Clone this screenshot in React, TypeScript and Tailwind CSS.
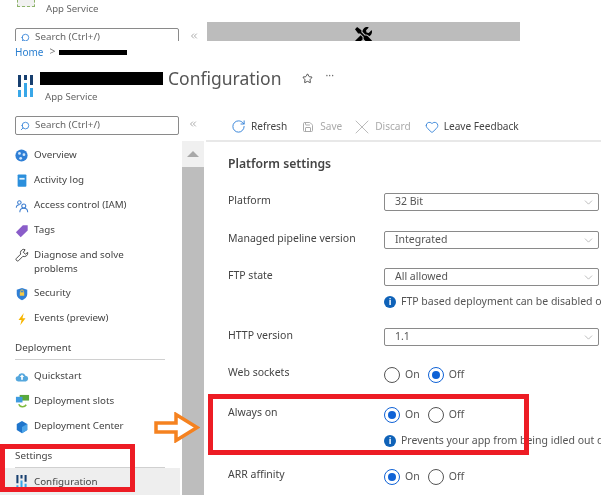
import type { ReactNode } from "react";
import { FaTools } from "react-icons/fa";
import {
  ChevronDown,
  ChevronsLeft,
  Heart,
  RotateCw,
  Save,
  Search,
  Star,
  X,
} from "lucide-react";

function Overview() {
  return (
    <svg viewBox="0 0 16 16" className="w-[13px] h-[13px]">
      <circle cx="8" cy="8" r="7.5" fill="#2f7fd6" />
      <circle cx="5.5" cy="5.5" r="1.7" fill="#cfe6fb" />
      <circle cx="11" cy="7" r="1.7" fill="#cfe6fb" />
      <circle cx="7" cy="11.5" r="1.7" fill="#cfe6fb" />
    </svg>
  );
}

function ActivityLog() {
  return (
    <svg viewBox="0 0 16 16" className="w-[14px] h-[15px]">
      <rect x="3" y="1" width="10" height="14" rx="1" fill="#2b8fdc" />
      <rect x="5" y="5" width="6" height="2" fill="#e3f2fd" />
    </svg>
  );
}

function AccessControl() {
  return (
    <svg viewBox="0 0 16 16" className="w-[14px] h-[14px]" fill="none" stroke="#3f7fd0" strokeWidth="1.2">
      <circle cx="5" cy="4" r="2" />
      <path d="M1.5 10c0-2.5 1.5-3.5 3.5-3.5" />
      <circle cx="10" cy="8" r="2.3" />
      <path d="M5.5 15c0-3 2-4.5 4.5-4.5s4.5 1.500 4.500 4.500" />
    </svg>
  );
}

function Tags() {
  return (
    <svg viewBox="0 0 16 16" className="w-[14px] h-[14px]">
      <path d="M1 9.500 9 1.500h5.500v6l-8 7.500z" fill="#8a5dc9" />
    </svg>
  );
}

function Diagnose() {
  return (
    <svg viewBox="0 0 16 16" className="w-[14px] h-[14px]" fill="none" stroke="#444" strokeWidth="1.1">
      <path d="M10 1.500a4 4 0 0 0-3.500 5.500L1.500 12a1.800 1.800 0 0 0 2.500 2.500l5-5A4 4 0 0 0 14.500 5L12 7 9.500 5l2-3z" />
    </svg>
  );
}

function Security() {
  return (
    <svg viewBox="0 0 16 16" className="w-[14px] h-[14px]">
      <path d="M8 1l6 2v5c0 3.500-3 6-6 7-3-1-6-3.500-6-7V3z" fill="#2f7fd6" />
      <rect x="5.500" y="6" width="5" height="4" fill="#f6c945" />
      <path d="M6.500 6V4.800a1.500 1.500 0 0 1 3 0V6" fill="none" stroke="#f6c945" />
    </svg>
  );
}

function Events() {
  return (
    <svg viewBox="0 0 16 16" className="w-[14px] h-[14px]">
      <path d="M10 1 4 9h3.500L6 15l6-8H8.500z" fill="#f7b500" />
    </svg>
  );
}

function Quickstart() {
  return (
    <svg viewBox="0 0 16 16" className="w-[14px] h-[14px]">
      <path d="M4 13a3 3 0 0 1-.5-6A4.500 4.500 0 0 1 12 6.500 3.300 3.300 0 0 1 12.500 13z" fill="#55a7dd" />
      <path d="M8 5l2.500 3H9v3H7V8H5.500z" fill="#fff" />
    </svg>
  );
}

function Slots() {
  return (
    <svg viewBox="0 0 16 16" className="w-[15px] h-[15px]">
      <rect x="5" y="1" width="10" height="6" fill="#5aa83c" />
      <rect x="1" y="3" width="7" height="6" fill="#3f9be0" />
      <path d="M4 11c1 3 6 3.500 8 .5" fill="none" stroke="#7fba3c" strokeWidth="1.600" />
    </svg>
  );
}

function Center() {
  return (
    <svg viewBox="0 0 16 16" className="w-[14px] h-[14px]">
      <path d="M8 1l6 3.500v7L8 15l-6-3.500v-7z" fill="#1f75cc" />
      <path d="M8 8l6-3.500v7L8 15z" fill="#4ba3e8" />
    </svg>
  );
}

function AppBars({ className }: { className: string }) {
  return (
    <svg viewBox="0 0 17 22" className={className}>
      <path d="M1 0h3v12H1zM7 0h3v5H7zM13 0h3v10h-3z" fill="#173f6f" />
      <path d="M1 15h3v7H1zM7 8h3v14H7zM13 13h3v9h-3z" fill="#39a7e8" />
    </svg>
  );
}

const groupOne = [
  { label: "Overview", icon: <Overview /> },
  { label: "Activity log", icon: <ActivityLog /> },
  { label: "Access control (IAM)", icon: <AccessControl /> },
  { label: "Tags", icon: <Tags /> },
  { label: "Diagnose and solve problems", icon: <Diagnose />, tall: true },
  { label: "Security", icon: <Security /> },
  { label: "Events (preview)", icon: <Events /> },
];

const groupTwo = [
  { label: "Quickstart", icon: <Quickstart /> },
  { label: "Deployment slots", icon: <Slots /> },
  { label: "Deployment Center", icon: <Center /> },
];

function NavItem({ label, icon, tall }: { label: string; icon: ReactNode; tall?: boolean }) {
  return (
    <div className={`flex pl-[15px] ${tall ? "h-[38px] items-start pt-[5px]" : "h-[25px] items-center"}`}>
      <span className="w-[19px] shrink-0 flex items-center">{icon}</span>
      <span className={tall ? "w-[110px] leading-[14px]" : ""}>{label}</span>
    </div>
  );
}

function SearchBox() {
  return (
    <div className="ml-[15px] w-[164px] h-[19px] shrink-0 border border-[#8a8a8a] rounded-[2px] flex items-center px-[4px] gap-[5px] text-[9.8px] text-[#666]">
      <Search className="w-[10px] h-[10px] text-[#2f7fd6] -scale-x-100" />
      <span>Search (Ctrl+/)</span>
    </div>
  );
}

function Select({ value }: { value: string }) {
  return (
    <div className="w-[215px] h-[18px] border border-[#8a8a8a] rounded-[2px] flex items-center justify-between pl-[10px] pr-[3px] text-[#555]">
      <span>{value}</span>
      <ChevronDown className="w-[13px] h-[13px] text-[#9a9a9a]" strokeWidth={1.2} />
    </div>
  );
}

function Radio({ on, label }: { on?: boolean; label: string }) {
  return (
    <div className="flex items-center gap-[5px]">
      <span
        className={`w-[16px] h-[16px] rounded-full border flex items-center justify-center ${on ? "border-[#0f62d6]" : "border-[#555]"}`}
      >
        {on && <span className="w-[8px] h-[8px] rounded-full bg-[#0f62d6]" />}
      </span>
      <span className="text-[#555]">{label}</span>
    </div>
  );
}

function Radios({ value }: { value: "on" | "off" }) {
  return (
    <div className="flex items-center gap-[8px] h-[18px]">
      <Radio on={value === "on"} label="On" />
      <Radio on={value === "off"} label="Off" />
    </div>
  );
}

function Info({ text, className }: { text: string; className: string }) {
  return (
    <div className={`flex items-center gap-[5px] h-[14px] ml-[156px] whitespace-nowrap text-[#555] ${className}`}>
      <span className="w-[12px] h-[12px] shrink-0 rounded-full bg-[#0f62b8] text-white text-[9px] font-bold leading-[12px] text-center">
        i
      </span>
      {text}
    </div>
  );
}

function Row({
  label,
  className,
  tight,
  children,
}: {
  label: string;
  className: string;
  tight?: boolean;
  children: ReactNode;
}) {
  return (
    <div className={`flex h-[18px] ${className}`}>
      <span className={`w-[156px] shrink-0 leading-[14px] text-[#444] ${tight ? "-mt-[1px]" : ""}`}>{label}</span>
      {children}
    </div>
  );
}

export default function App() {
  return (
    <div
      className="relative w-[601px] h-[495px] overflow-hidden bg-white text-[10.5px] text-[#444] blur-[0.35px]"
      style={{ fontFamily: '"Noto Sans", sans-serif' }}
    >
      {/* pasted strip of the earlier screenshot */}
      <div className="h-[41px] flex overflow-hidden">
        <div className="w-[207px] shrink-0">
          <div className="flex h-[28px]">
            <div className="ml-[17px] w-[18px] h-[7px] border border-dashed border-t-0 border-[#8db36a] bg-[#f1f1f1]" />
            <span className="ml-[11px] mt-[2px] text-[9.6px] text-[#666]">App Service</span>
          </div>
          <div className="flex items-start">
            <SearchBox />
            <ChevronsLeft className="ml-[10px] mt-[3px] w-[10px] h-[10px] text-[#999]" />
          </div>
        </div>
        <div className="mt-[22px] w-[313px] h-[19px] bg-[#bcbcbc] flex justify-center pt-[4px] overflow-hidden">
          <FaTools className="w-[17px] h-[19px] text-black shrink-0" />
        </div>
      </div>

      <div className="h-[20px] pl-[15px] flex items-center pt-[2px]">
        <span className="text-[#2a7fd0] text-[10px]">Home</span>
        <span className="ml-[6px] text-[#777]">&gt;</span>
        <span className="ml-[4px] w-[68px] h-[5px] bg-black" />
      </div>

      <div className="h-[46px] pl-[17px] flex">
        <AppBars className="mt-[14px] w-[17px] h-[22px] shrink-0" />
        <div className="ml-[6px]">
          <div className="flex items-center h-[34px]">
            <span className="w-[123px] h-[13px] bg-black" />
            <span className="ml-[5px] text-[17.5px] text-[#555]">Configuration</span>
            <Star className="ml-[20px] w-[11px] h-[11px] text-[#444]" />
            <span className="ml-[13px] text-[#666] -mt-[4px]">···</span>
          </div>
          <div className="ml-[5px] -mt-[5px] text-[9.6px] text-[#666]">App Service</div>
        </div>
      </div>

      <div className="flex h-[388px]">
        <aside className="w-[182px] shrink-0 pt-[9px] text-[9.8px]">
          <div className="flex items-start">
            <SearchBox />
            <ChevronsLeft className="ml-[9px] mt-[3px] w-[10px] h-[10px] text-[#999] shrink-0" />
          </div>
          <div className="mt-[8px]">
            {groupOne.map((item) => (
              <NavItem key={item.label} {...item} />
            ))}
          </div>
          <div className="ml-[15px] w-[150px] h-[29px] flex items-end pb-[3px] border-b border-[#d0d0d0] text-[#444]">
            Deployment
          </div>
          <div className="mt-[4px]">
            {groupTwo.map((item) => (
              <NavItem key={item.label} {...item} />
            ))}
          </div>
          <div className="ml-[15px] w-[150px] h-[29px] flex items-end pb-[3px] border-b border-[#d0d0d0] text-[#444]">
            Settings
          </div>
          <div className="h-[27px] w-[180px] bg-[#eeeeee] flex items-center pl-[15px] pt-[1px]">
            <span className="w-[19px] flex items-center">
              <AppBars className="w-[13px] h-[15px]" />
            </span>
            Configuration
          </div>
        </aside>

        <div className="w-[22px] shrink-0 mt-[34px] flex flex-col">
          <div className="h-[26px] bg-[#f0f0f0] flex items-center justify-center">
            <span className="w-0 h-0 border-x-[6px] border-x-transparent border-b-[6px] border-b-[#a8a8a8]" />
          </div>
          <div className="flex-1 bg-[#bdbdbd]" />
        </div>

        <main className="flex-1 min-w-0 overflow-hidden">
          <div className="h-[35px] ml-[2px] border-b-2 border-[#e8e8e8] flex items-center pt-[6px] pl-[25px] whitespace-nowrap text-[10.1px]">
            <RotateCw className="w-[15px] h-[15px] text-[#2f7fd6]" strokeWidth={1.500} />
            <span className="ml-[5px] text-[#444]">Refresh</span>
            <Save className="ml-[15px] w-[12px] h-[12px] text-[#aaa]" />
            <span className="ml-[6px] text-[#aaa]">Save</span>
            <X className="ml-[8px] w-[24px] h-[24px] text-[#aaa]" strokeWidth={0.8} />
            <span className="ml-[1px] text-[#aaa]">Discard</span>
            <Heart className="ml-[14px] w-[14px] h-[14px] text-[#2f7fd6]" strokeWidth={1.500} />
            <span className="ml-[5px] text-[#444]">Leave Feedback</span>
          </div>

          <div className="pl-[24px]">
            <h2 className="mt-[14px] h-[15px] leading-[15px] text-[12.2px] font-semibold text-[#444]">
              Platform settings
            </h2>
            <Row label="Platform" className="mt-[22px]">
              <Select value="32 Bit" />
            </Row>
            <Row label="Managed pipeline version" className="mt-[20px]">
              <Select value="Integrated" />
            </Row>
            <Row label="FTP state" className="mt-[19px]">
              <Select value="All allowed" />
            </Row>
            <Info text="FTP based deployment can be disabled or" className="mt-[9px]" />
            <Row label="HTTP version" className="mt-[19px]">
              <Select value="1.1" />
            </Row>
            <Row label="Web sockets" className="mt-[20px]" tight>
              <Radios value="off" />
            </Row>
            <Row label="Always on" className="mt-[22px]" tight>
              <Radios value="on" />
            </Row>
            <Info text="Prevents your app from being idled out d" className="mt-[10px]" />
            <Row label="ARR affinity" className="mt-[20px]" tight>
              <Radios value="on" />
            </Row>
          </div>
        </main>
      </div>

      {/* annotations drawn on top of the screenshot */}
      <div className="absolute left-0 top-[444px] w-[135px] h-[48px] border-[5px] border-[#ed1c24]" />
      <div className="absolute left-[208px] top-[394px] w-[321px] h-[61px] border-[5px] border-[#ed1c24]" />
      <svg viewBox="0 0 46 31" className="absolute left-[154px] top-[412px] w-[46px] h-[31px]">
        <path d="M2 11H22V2.500l21 13L22 28.500V20H2z" fill="#fff" stroke="#f58220" strokeWidth="3.500" />
      </svg>
    </div>
  );
}
